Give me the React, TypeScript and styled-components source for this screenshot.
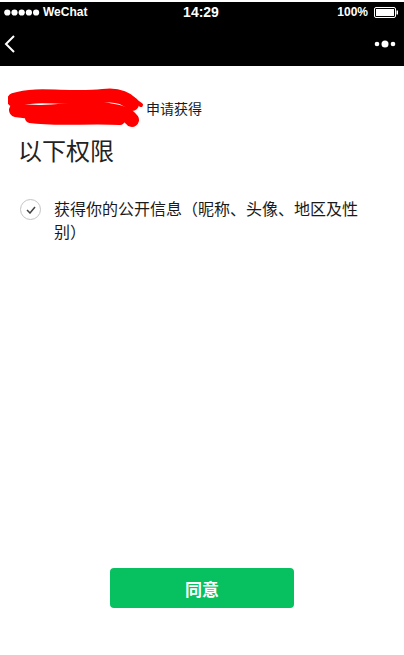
import React from "react";
import styled, { createGlobalStyle } from "styled-components";

const GlobalStyle = createGlobalStyle`
  html, body {
    margin: 0;
    padding: 0;
    background: #fff;
  }
  body {
    font-family: "Liberation Sans", "Noto Sans CJK SC", Arial, sans-serif;
    color: #1a1a1a;
  }
`;

const Screen = styled.div`
  width: 404px;
  min-height: 655px;
  display: flex;
  flex-direction: column;
  padding-top: 2px;
  box-sizing: border-box;
`;

const StatusBar = styled.div`
  height: 20px;
  background: #000;
  color: #fff;
  display: grid;
  grid-template-columns: 1fr auto 1fr;
  align-items: center;
  padding: 0 6px 0 4px;
  font-size: 12px;
  font-weight: bold;
`;

const Carrier = styled.div`
  display: flex;
  align-items: center;
  gap: 3px;
`;

const Clock = styled.div`
  font-size: 14px;
`;

const Battery = styled.div`
  display: flex;
  align-items: center;
  justify-content: flex-end;
  gap: 6px;
`;

const NavBar = styled.div`
  height: 44px;
  background: #000;
  display: flex;
  align-items: center;
  justify-content: space-between;
  padding: 0 8px 0 3px;
`;

const Content = styled.div`
  flex: 1;
  padding: 22px 18px 0 18px;
  display: flex;
  flex-direction: column;
`;

const RequestLine = styled.div`
  display: flex;
  align-items: center;
  margin-left: -10px;
  height: 40px;
  font-size: 14px;
  .who {
    width: 138px;
  }
`;

const Title = styled.h1`
  margin: 8px 0 0 0;
  font-size: 24px;
  font-weight: normal;
  color: #222;
  line-height: 32px;
`;

const PermissionRow = styled.div`
  display: flex;
  align-items: flex-start;
  gap: 13px;
  margin-top: 30px;
  margin-left: 2px;
`;

const Check = styled.span`
  flex: none;
  width: 19px;
  height: 19px;
  border: 1px solid #c4c4c4;
  border-radius: 50%;
  display: flex;
  align-items: center;
  justify-content: center;
  margin-top: 1px;
`;

const PermissionText = styled.div`
  width: 312px;
  font-size: 16px;
  line-height: 23px;
  color: #1a1a1a;
`;

const Footer = styled.div`
  display: flex;
  justify-content: center;
  padding-bottom: 47px;
`;

const AgreeButton = styled.button`
  width: 184px;
  height: 40px;
  border: none;
  border-radius: 4px;
  background: #07c160;
  color: #fff;
  font-size: 17px;
  font-weight: bold;
  font-family: inherit;
`;

function SignalDots() {
  return (
    <svg width="36" height="7" viewBox="0 0 36 7">
      {[0, 1, 2, 3, 4].map((i) => (
        <circle key={i} cx={3.3 + i * 7.2} cy="3.5" r="3.1" fill="#fff" />
      ))}
    </svg>
  );
}

function Redaction() {
  return (
    <svg className="who" width="138" height="40" viewBox="0 0 138 40">
      <g stroke="#ff0000" strokeLinecap="round" strokeLinejoin="round" fill="none">
        <path d="M6 12 C30 4, 60 12, 95 8 C110 6, 118 10, 124 16" strokeWidth="14" />
        <path d="M8 22 C40 28, 70 18, 100 22 C112 24, 120 26, 124 32" strokeWidth="14" />
        <path d="M22 30 C50 34, 80 30, 112 32" strokeWidth="10" />
        <path d="M126 12 L133 17" strokeWidth="4" />
      </g>
    </svg>
  );
}

export default function App() {
  return (
    <>
      <GlobalStyle />
      <Screen>
        <StatusBar>
          <Carrier>
            <SignalDots />
            <span>WeChat</span>
          </Carrier>
          <Clock>14:29</Clock>
          <Battery>
            <span>100%</span>
            <svg width="24" height="11" viewBox="0 0 24 11">
              <rect x="0.5" y="0.5" width="21" height="10" rx="1.5" fill="none" stroke="#fff" />
              <rect x="2" y="2" width="18" height="7" fill="#fff" />
              <rect x="22.5" y="3.5" width="1.5" height="4" fill="#fff" />
            </svg>
          </Battery>
        </StatusBar>
        <NavBar>
          <svg width="14" height="20" viewBox="0 0 14 20">
            <path d="M11 2 L3 10 L11 18" stroke="#fff" strokeWidth="2" fill="none" />
          </svg>
          <svg width="22" height="8" viewBox="0 0 22 8">
            <circle cx="3" cy="4" r="2.3" fill="#fff" />
            <circle cx="11" cy="4" r="3.5" fill="#fff" />
            <circle cx="19" cy="4" r="2.3" fill="#fff" />
          </svg>
        </NavBar>
        <Content>
          <RequestLine>
            <Redaction />
            <span>申请获得</span>
          </RequestLine>
          <Title>以下权限</Title>
          <PermissionRow>
            <Check>
              <svg width="10" height="8" viewBox="0 0 10 8">
                <path d="M1 4 L4 7 L9 1" stroke="#444" strokeWidth="1.5" fill="none" />
              </svg>
            </Check>
            <PermissionText>获得你的公开信息（昵称、头像、地区及性别）</PermissionText>
          </PermissionRow>
        </Content>
        <Footer>
          <AgreeButton>同意</AgreeButton>
        </Footer>
      </Screen>
    </>
  );
}
